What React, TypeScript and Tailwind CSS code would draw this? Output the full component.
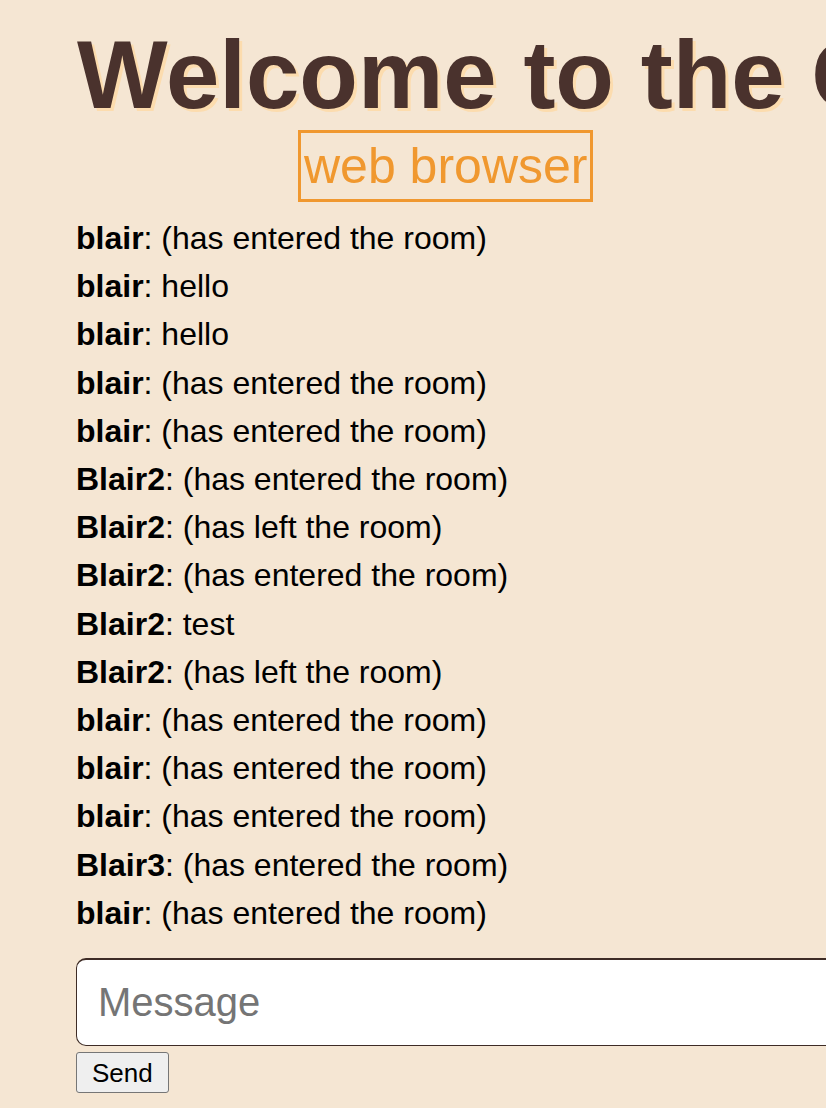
const messages: { user: string; text: string }[] = [
  { user: 'blair', text: '(has entered the room)' },
  { user: 'blair', text: 'hello' },
  { user: 'blair', text: 'hello' },
  { user: 'blair', text: '(has entered the room)' },
  { user: 'blair', text: '(has entered the room)' },
  { user: 'Blair2', text: '(has entered the room)' },
  { user: 'Blair2', text: '(has left the room)' },
  { user: 'Blair2', text: '(has entered the room)' },
  { user: 'Blair2', text: 'test' },
  { user: 'Blair2', text: '(has left the room)' },
  { user: 'blair', text: '(has entered the room)' },
  { user: 'blair', text: '(has entered the room)' },
  { user: 'blair', text: '(has entered the room)' },
  { user: 'Blair3', text: '(has entered the room)' },
  { user: 'blair', text: '(has entered the room)' },
];

export default function App() {
  return (
    <div className="min-h-screen overflow-hidden bg-[#f5e6d3] font-['Liberation_Sans',Arial,sans-serif] text-black">
      <div className="w-[1000px] pl-[76px]">
        {/* title runs past the window edge, as in the original */}
        <h1 className="mt-[20px] whitespace-nowrap pl-[1px] text-[96px] font-bold leading-[110px] text-[#4a322d] [text-shadow:3px_3px_0_#fcdcae]">
          Welcome to the Chat Room
        </h1>
        <div className="ml-[222px]">
          <span className="inline-block border-[3px] border-[#f0982f] px-[3px] text-[50px] leading-[66px] text-[#f0982f]">
            web browser
          </span>
        </div>
        <ul className="mt-[12px]">
          {messages.map((m, i) => (
            <li key={i} className="text-[32px] leading-[48.2px]">
              <strong className="font-bold">{m.user}</strong>: {m.text}
            </li>
          ))}
        </ul>
        <form className="mt-[21px]" onSubmit={(e) => e.preventDefault()}>
          <input
            type="text"
            placeholder="Message"
            className="block h-[88px] w-[900px] rounded-[10px] border border-t-2 border-[#3e2c26] bg-white px-[21px] text-[40px] outline-none placeholder:text-[#757575]"
          />
          <button
            type="submit"
            className="mt-[6px] block h-[41px] rounded-[3px] border border-[#767676] bg-[#efefef] px-[15px] text-[26px] leading-none"
          >
            Send
          </button>
        </form>
      </div>
    </div>
  );
}
